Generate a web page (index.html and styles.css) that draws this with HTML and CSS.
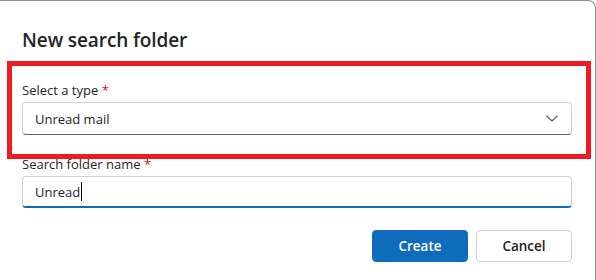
FILE: index.html
```html
<!DOCTYPE html>
<html>
<head>
<meta charset="utf-8">
<link rel="stylesheet" href="styles.css">
</head>
<body>
<div class="dialog">
  <h1 class="title">New search folder</h1>
  <div class="fields">
    <div class="field">
      <label class="label">Select a type <span class="req">*</span></label>
      <div class="control dropdown">
        <span class="value">Unread mail</span>
        <svg class="chev" width="12" height="7" viewBox="0 0 12 7"><path d="M0.8 1 L6 6 L11.2 1" fill="none" stroke="#616161" stroke-width="1.1" stroke-linecap="round" stroke-linejoin="round"/></svg>
      </div>
    </div>
    <div class="field">
      <label class="label">Search folder name <span class="req">*</span></label>
      <div class="control input">
        <span class="value">Unread</span><span class="caret"></span>
      </div>
    </div>
  </div>
  <div class="actions">
    <button class="btn primary">Create</button>
    <button class="btn">Cancel</button>
  </div>
  <div class="highlight"></div>
</div>
</body>
</html>
```
FILE: styles.css
```css
* { box-sizing: border-box; }
html, body { margin: 0; padding: 0; background: #ffffff; }
body {
  font-family: "Open Sans", "Noto Sans", "Liberation Sans", sans-serif;
  color: #242424;
  width: 596px;
  height: 280px;
  overflow: hidden;
}
.dialog {
  position: relative;
  width: 597px;
  height: 281px;
  margin-left: -1px;
  border-top: 1px solid #8f8f8f;
  border-right: 1px solid #8f8f8f;
  border-top-right-radius: 8px;
  padding: 25px 23px 0 23px;
}
.title {
  margin: 0;
  font-size: 19px;
  font-weight: 600;
  line-height: 28px;
  letter-spacing: -0.1px;
}
.fields {
  margin-top: 26px;
  display: flex;
  flex-direction: column;
  gap: 19px;
}
.field { display: flex; flex-direction: column; gap: 2px; }
.label {
  font-size: 13px;
  line-height: 20px;
  color: #242424;
}
.req { color: #c50f1f; }
.control {
  height: 33px;
  border: 1px solid #d1d1d1;
  border-bottom-color: #616161;
  border-radius: 4px;
  display: flex;
  align-items: center;
  padding: 0 12px;
  font-size: 13px;
}
.dropdown { justify-content: space-between; padding-right: 13px; }
.input { height: 32px; border-bottom: 2px solid #0f6cbd; }
.caret {
  display: inline-block;
  width: 1px;
  height: 19px;
  background: #000;
  margin-left: 1px;
}
.actions {
  margin-top: 22px;
  display: flex;
  justify-content: flex-end;
  gap: 8px;
}
.btn {
  width: 96px;
  height: 32px;
  border-radius: 4px;
  border: 1px solid #d1d1d1;
  background: #fff;
  color: #242424;
  font-family: inherit;
  font-size: 13.5px;
  font-weight: 600;
}
.btn.primary {
  background: #0f6cbd;
  border-color: #0f6cbd;
  color: #fff;
}
.highlight {
  position: absolute;
  left: 8px;
  top: 60px;
  width: 584px;
  height: 98px;
  border: 5px solid #ed1c24;
}
```
